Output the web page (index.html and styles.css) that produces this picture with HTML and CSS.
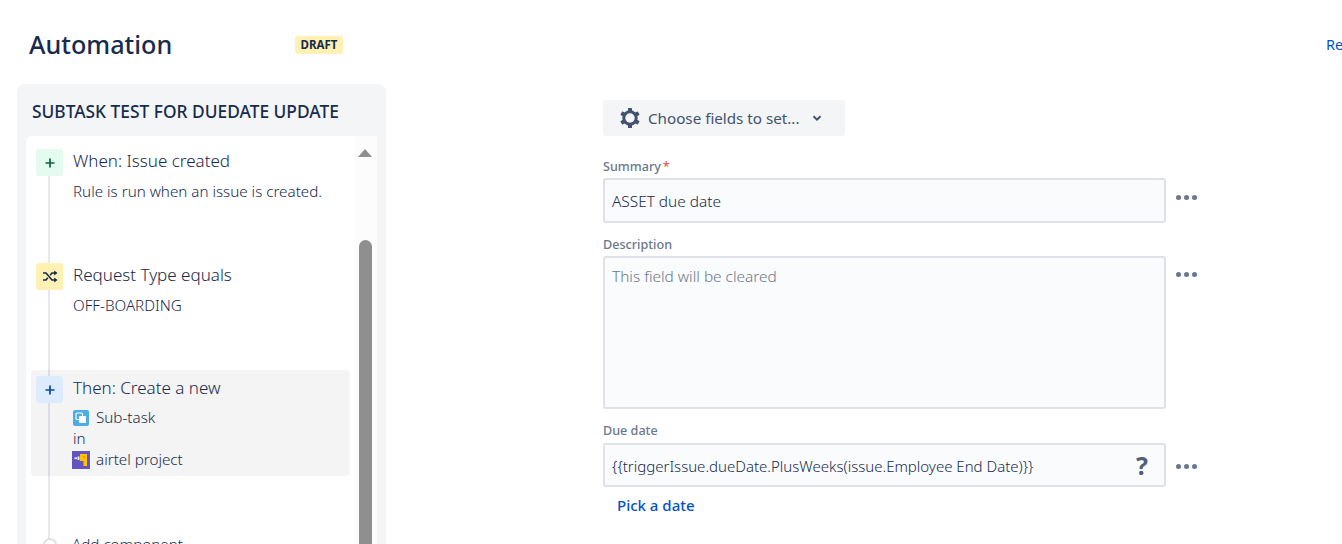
FILE: index.html
```html
<!DOCTYPE html>
<html lang="en">
<head>
<meta charset="utf-8">
<title>Automation</title>
<link rel="stylesheet" href="styles.css">
</head>
<body>
<div class="page">
  <header class="top">
    <h1 class="title">Automation</h1>
    <span class="badge">DRAFT</span>
    <a class="return">Return to list</a>
  </header>
  <main class="main">
    <aside class="rule">
      <h2 class="rule-name">SUBTASK TEST FOR DUEDATE UPDATE</h2>
      <div class="rule-body">
        <div class="steps">
          <span class="line"></span>
          <div class="step step-when">
            <span class="ico ico-green"><svg width="12" height="12" viewBox="0 0 12 12"><path d="M6 1.500v9M1.500 6h9" stroke="#006644" stroke-width="1.700"/></svg></span>
            <div class="step-text">
              <div class="step-title">When: Issue created</div>
              <div class="step-desc">Rule is run when an issue is created.</div>
            </div>
          </div>
          <div class="step step-if">
            <span class="ico ico-yellow"><svg width="16" height="13" viewBox="0 0 16 13" fill="none" stroke="#172b4d" stroke-width="1.600"><path d="M1 3h3l6 7h3M1 10h3l1.800-2.200M8.200 5.200 10 3h3"/><path d="M12.200 0.500l3.300 2.500-3.300 2.500zM12.200 7.500l3.300 2.500-3.300 2.500z" fill="#172b4d" stroke="none"/></svg></span>
            <div class="step-text">
              <div class="step-title">Request Type equals</div>
              <div class="step-desc">OFF-BOARDING</div>
            </div>
          </div>
          <div class="step step-then">
            <span class="ico ico-blue"><svg width="12" height="12" viewBox="0 0 12 12"><path d="M6 1.500v9M1.500 6h9" stroke="#0747a6" stroke-width="1.700"/></svg></span>
            <div class="step-text">
              <div class="step-title">Then: Create a new</div>
              <div class="step-lines">
                <div class="obj"><svg class="obj-ico" width="16" height="16" viewBox="0 0 16 16"><rect width="16" height="16" rx="2" fill="#4bade8"/><rect x="3" y="3" width="6.500" height="6.500" rx="1" fill="none" stroke="#fff" stroke-width="1.200"/><rect x="6" y="6" width="7" height="7" rx="1" fill="#fff"/></svg>Sub-task</div>
                <div>in</div>
                <div class="obj"><svg class="obj-ico obj-proj" width="18" height="18" viewBox="0 0 18 18"><rect width="18" height="18" fill="#6554c0"/><path d="M8 3h7v12h-3.500v-5H8z" fill="#ffc400"/><path d="M11 5h2v2h-2z" fill="#ff8b00"/><path d="M2.500 6.500h2.500v1.500H2.500z" fill="#fff"/><path d="M5.500 5.500h2v3.500h-2z" fill="#deebff"/></svg>airtel project</div>
              </div>
            </div>
          </div>
          <div class="step step-add">
            <span class="circle"></span>
            <div class="add-text">Add component</div>
          </div>
        </div>
        <div class="scroll">
          <span class="arrow"></span>
          <span class="thumb"></span>
        </div>
      </div>
    </aside>
    <section class="form">
      <button class="choose" type="button">
        <svg width="22" height="22" viewBox="0 0 22 22"><g fill="#42526e"><rect x="9" y="1" width="4" height="20" rx="0.500"/><rect x="9" y="1" width="4" height="20" rx="0.500" transform="rotate(60 11 11)"/><rect x="9" y="1" width="4" height="20" rx="0.500" transform="rotate(120 11 11)"/></g><circle cx="11" cy="11" r="6.200" fill="none" stroke="#42526e" stroke-width="3"/><circle cx="11" cy="11" r="4.700" fill="#f4f5f7"/></svg>
        <span class="choose-text">Choose fields to set...</span>
        <svg width="12" height="12" viewBox="0 0 12 12" fill="none"><path d="M2.500 4.200 6 7.700l3.500-3.500" stroke="#42526e" stroke-width="2"/></svg>
      </button>
      <label class="label label-summary">Summary<span class="req">*</span></label>
      <div class="row">
        <div class="field field-text">ASSET due date</div>
        <span class="dots dots-up"><i></i><i></i><i></i></span>
      </div>
      <label class="label label-desc">Description</label>
      <div class="row row-top">
        <div class="field area">This field will be cleared</div>
        <span class="dots dots-area"><i></i><i></i><i></i></span>
      </div>
      <label class="label label-due">Due date</label>
      <div class="row">
        <div class="field due"><span class="due-text">{{triggerIssue.dueDate.PlusWeeks(issue.Employee End Date)}}</span><span class="q">?</span></div>
        <span class="dots dots-down"><i></i><i></i><i></i></span>
      </div>
      <a class="pick">Pick a date</a>
    </section>
  </main>
</div>
</body>
</html>
```
FILE: styles.css
```css
* { box-sizing: border-box; }
html, body { margin: 0; height: 100%; overflow: hidden; background: #fff; }
body { font-family: "Noto Sans", "Open Sans", sans-serif; color: #172b4d; font-size: 14px; }
.page { width: 1342px; height: 544px; overflow: hidden; }
.top { display: flex; align-items: center; height: 84px; padding: 6px 0 0 29px; position: relative; white-space: nowrap; }
.title { margin: 0; font-size: 25.200px; font-weight: 500; line-height: 30px; width: 266px; position: relative; top: -1px; }
.badge { background: #fff0b3; color: #172b4d; font-size: 11.500px; font-weight: 700; line-height: 18px; height: 18px; width: 48px; text-align: center; border-radius: 3px; }
.return { position: absolute; left: 1326px; top: 35px; color: #0052cc; font-size: 14.500px; line-height: 18px; }
.main { display: flex; align-items: flex-start; }
.rule { margin-left: 17px; width: 369px; height: 520px; background: #f4f5f7; border-radius: 8px; padding: 0 9px; flex: none; }
.rule-name { margin: 0; padding-left: 6px; font-size: 17.350px; font-weight: 500; line-height: 22px; padding-top: 16px; height: 52px; white-space: nowrap; }
.rule-body { background: #fff; border-radius: 6px 0 0 0; display: flex; height: 468px; }
.steps { position: relative; width: 328px; padding: 0 0 0 5px; flex: none; }
.line { position: absolute; left: 22px; top: 40px; bottom: 0; width: 2px; background: #e6e7ef; }
.step { display: flex; position: relative; border-radius: 4px; padding-left: 5px; }
.step-when { padding-top: 13px; height: 127px; }
.step-if { height: 107px; }
.step-then { background: rgba(0, 0, 0, 0.045); height: 106px; width: 319px; padding-top: 6px; }
.step-add { margin-top: 61px; padding-left: 12px; }
.ico { width: 27px; height: 27px; border-radius: 3px; display: flex; align-items: center; justify-content: center; flex: none; }
.ico-green { background: #e3fcef; }
.ico-yellow { background: #fff0b3; }
.ico-blue { background: #deebff; }
.step-text { margin-left: 10px; }
.step-title { font-size: 17px; font-weight: 300; line-height: 24px; color: #172b4d; }
.step-desc { margin-top: 8px; font-size: 15.200px; line-height: 20px; font-weight: 300; color: #172b4d; }
.step-lines { margin-top: 7px; font-size: 15.200px; line-height: 21px; font-weight: 300; color: #172b4d; }
.obj { display: flex; align-items: center; }
.obj-ico { margin-right: 7px; flex: none; }
.obj-proj { margin-left: -1px; margin-right: 6px; }
.circle { width: 14px; height: 14px; border: 2px solid #dfe1e6; border-radius: 50%; background: #fff; flex: none; margin-top: 1px; }
.add-text { margin: -3px 0 0 15px; font-size: 15.200px; line-height: 20px; font-weight: 300; color: #172b4d; }
.scroll { position: relative; width: 23px; margin-left: 0; background: #fcfcfc; flex: none; }
.arrow { position: absolute; left: 4px; top: 13px; border-left: 7.500px solid transparent; border-right: 7.500px solid transparent; border-bottom: 8px solid #8f8f8f; }
.thumb { position: absolute; left: 5px; top: 104px; width: 13px; height: 420px; background: #8f8f8f; border-radius: 7px; }
.form { margin-left: 217px; padding-top: 16px; width: 600px; flex: none; }
.choose { display: flex; align-items: center; width: 242px; height: 36px; background: #f4f5f7; border: 0; border-radius: 3px; padding: 0 0 0 16px; font: inherit; color: #42526e; }
.choose-text { margin-left: 7px; margin-right: 11px; font-size: 15.200px; font-weight: 400; white-space: nowrap; }
.label { display: block; font-size: 12.600px; font-weight: 500; line-height: 16px; color: #6b778c; }
.label-summary { margin-top: 23px; height: 19px; }
.label-desc { margin-top: 14px; height: 19px; }
.label-due { margin-top: 14px; height: 20px; }
.req { color: #e2574c; margin-left: 2px; }
.row { display: flex; align-items: center; }
.row-top { align-items: flex-start; }
.field { width: 563px; height: 45px; border: 2px solid #dfe1e6; border-radius: 3px; background: #fafbfc; padding: 0 7px; display: flex; align-items: center; font-size: 15.400px; font-weight: 300; color: #172b4d; flex: none; white-space: nowrap; }
.field-text { padding-top: 2px; }
.area { height: 153px; align-items: flex-start; padding-top: 8px; font-size: 15.400px; color: #6b778c; }
.due { justify-content: space-between; height: 44px; padding-right: 14px; font-size: 15px; }
.due-text { padding-top: 2px; }
.q { font-size: 25px; font-weight: 700; color: #505f79; line-height: 30px; margin-right: 2px; }
.dots { display: flex; gap: 3px; margin-left: 10px; }
.dots i { width: 5px; height: 5px; border-radius: 50%; background: #6b778c; }
.dots-area { margin-top: 16px; }
.dots-up { margin-bottom: 7px; }
.dots-down { margin-top: 2px; }
.pick { display: block; margin: 8px 0 0 14px; color: #0052cc; font-weight: 500; font-size: 15px; line-height: 20px; }
```
